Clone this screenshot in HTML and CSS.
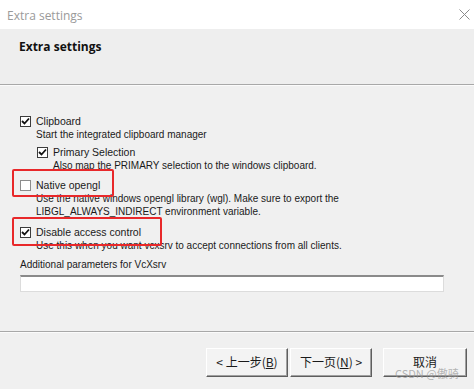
FILE: index.html
```html
<!DOCTYPE html>
<html lang="en">
<head>
    <meta charset="UTF-8">
    <title>Extra settings</title>
    <link rel="stylesheet" href="styles.css">
</head>
<body>
    <div class="window">
        <div class="titlebar">
            <span class="title">Extra settings</span>
            <svg class="close" width="11" height="11" viewBox="0 0 11 11">
                <path d="M0.5 0.5 L10.5 10.5 M10.5 0.5 L0.5 10.5" stroke="#8a8a8a" stroke-width="1"/>
            </svg>
        </div>

        <div class="header">
            <h2>Extra settings</h2>
        </div>

        <div class="content">
            <div class="row">
                <span class="cb checked"><svg width="9" height="9" viewBox="0 0 9 9"><path d="M1 4 L3.5 6.5 L8 1.5" stroke="#111" stroke-width="1.8" fill="none"/></svg></span>
                <span>Clipboard</span>
            </div>
            <div class="desc">Start the integrated clipboard manager</div>
            <div class="row sub r-primary">
                <span class="cb checked"><svg width="9" height="9" viewBox="0 0 9 9"><path d="M1 4 L3.5 6.5 L8 1.5" stroke="#111" stroke-width="1.8" fill="none"/></svg></span>
                <span>Primary Selection</span>
            </div>
            <div class="desc sub">Also map the PRIMARY selection to the windows clipboard.</div>

            <div class="row r-opengl">
                <span class="cb"></span>
                <span>Native opengl</span>
                <span class="mark mark-opengl"></span>
            </div>
            <div class="desc tight">Use the native windows opengl library (wgl). Make sure to export the</div>
            <div class="desc tight">LIBGL_ALWAYS_INDIRECT environment variable.</div>

            <div class="row r-access">
                <span class="cb checked"><svg width="9" height="9" viewBox="0 0 9 9"><path d="M1 4 L3.5 6.5 L8 1.5" stroke="#111" stroke-width="1.8" fill="none"/></svg></span>
                <span>Disable access control</span>
                <span class="mark mark-access"></span>
            </div>
            <div class="desc">Use this when you want vcxsrv to accept connections from all clients.</div>

            <div class="label">Additional parameters for VcXsrv</div>
            <input class="params" type="text">
        </div>

        <div class="footer">
            <button class="btn">&lt; 上一步(<u>B</u>)</button>
            <button class="btn">下一页(<u>N</u>) &gt;</button>
            <button class="btn cancel">取消<span class="watermark">CSDN @傲骑</span></button>
        </div>
    </div>
</body>
</html>
```

FILE: styles.css
```css
body {
    margin: 0;
    padding: 0;
    background-color: #f0f0f0;
    font-family: 'Liberation Sans', Arial, sans-serif;
    font-size: 10px;
    color: #1a1a1a;
}
.window {
    width: 474px;
    height: 389px;
    overflow: hidden;
}
.titlebar {
    height: 29px;
    background: #fff;
    display: flex;
    align-items: center;
    justify-content: space-between;
    padding: 0 4px 0 7px;
    box-sizing: border-box;
}
.title {
    font-family: 'Open Sans', 'Noto Sans', sans-serif;
    font-size: 12px;
    color: #9a9a9a;
    margin-top: 1px;
}
.close {
    margin-top: -1px;
}
.header {
    height: 56px;
    background: #eeeeee;
    border-bottom: 1px solid #a8a8a8;
    box-shadow: 0 1px 0 #fbfbfb;
    padding: 9px 0 0 19px;
    box-sizing: border-box;
}
.header h2 {
    margin: 0;
    font-family: 'Open Sans', 'Noto Sans', sans-serif;
    font-size: 12px;
    font-weight: bold;
    line-height: 17px;
    color: #111;
}
.content {
    height: 246px;
    padding: 29px 0 0 20px;
    box-sizing: border-box;
}
.row {
    position: relative;
    display: flex;
    align-items: center;
    height: 14px;
    line-height: 14px;
    font-size: 10.5px;
}
.row .cb {
    margin-right: 5px;
}
.sub {
    padding-left: 17px;
}
.r-primary { margin-top: 3px; }
.r-opengl { margin-top: 5px; }
.r-access { margin-top: 7px; }
.cb {
    width: 11px;
    height: 11px;
    box-sizing: border-box;
    border: 1px solid #3c3c3c;
    background: #fff;
    display: flex;
    align-items: center;
    justify-content: center;
}
.r-opengl .cb {
    border-color: #8c8c8c;
}
.desc {
    padding-left: 16px;
    height: 14px;
    line-height: 14px;
    white-space: nowrap;
}
.desc.sub {
    padding-left: 33px;
}
.desc.tight {
    height: 13px;
    line-height: 13px;
}
.mark {
    position: absolute;
    border: 2px solid #e8282a;
    border-radius: 2px;
}
.mark-opengl {
    left: -8px;
    top: -9px;
    width: 98px;
    height: 24px;
}
.mark-access {
    left: -8px;
    top: -8px;
    width: 146px;
    height: 25px;
}
.label {
    margin-top: 5px;
    height: 14px;
    line-height: 14px;
}
.params {
    display: block;
    margin-top: 3px;
    width: 424px;
    height: 17px;
    box-sizing: border-box;
    border: 1px solid #dcdcdc;
    border-top: 2px solid #8a8a8a;
    background: #fff;
    padding: 0;
}
.footer {
    border-top: 1px solid #a8a8a8;
    box-shadow: inset 0 1px 0 #fbfbfb;
    display: flex;
    justify-content: flex-end;
    padding: 16px 7px 0 0;
    height: 58px;
    box-sizing: border-box;
}
.btn {
    position: relative;
    width: 82px;
    height: 29px;
    margin-left: 2px;
    background: #f3f3f3;
    border: 1px solid;
    border-color: #ffffff #5e5e5e #5e5e5e #ffffff;
    box-shadow: inset -1px -1px 0 #a0a0a0;
    font-family: 'Noto Sans CJK SC', 'Liberation Sans', sans-serif;
    font-size: 12px;
    color: #1a1a1a;
    padding: 0 0 2px;
}
.btn.cancel {
    width: 84px;
    margin-left: 11px;
}
.watermark {
    position: absolute;
    left: 11px;
    top: 18px;
    font-size: 11px;
    line-height: 12px;
    color: rgba(150, 150, 150, 0.7);
    white-space: nowrap;
}
```
